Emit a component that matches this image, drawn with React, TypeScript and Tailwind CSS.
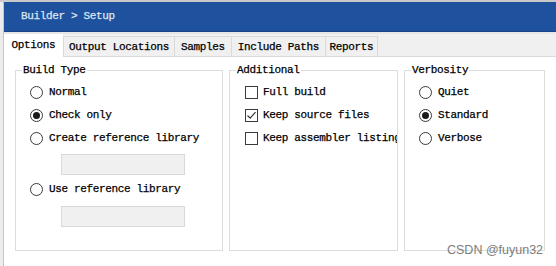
import React from "react";

const mono = "font-['Liberation_Mono','DejaVu_Sans_Mono',monospace] text-[11px] tracking-[-0.35px] text-black [-webkit-text-stroke:0.25px_currentColor]";

function Radio({ checked, label }: { checked?: boolean; label: string }) {
  return (
    <div className="flex h-[23px] items-center gap-[6px] whitespace-nowrap">
      <span className="flex h-[13px] w-[13px] shrink-0 items-center justify-center rounded-full border border-[#3a3a3a] bg-white">
        {checked && <span className="h-[7px] w-[7px] rounded-full bg-[#1a1a1a]" />}
      </span>
      <span>{label}</span>
    </div>
  );
}

function Check({ checked, label }: { checked?: boolean; label: string }) {
  return (
    <div className="flex h-[23px] items-center gap-[5px] whitespace-nowrap">
      <span className="flex h-[13px] w-[13px] shrink-0 items-center justify-center border border-[#3a3a3a] bg-white">
        {checked && (
          <svg width="11" height="11" viewBox="0 0 11 11">
            <path d="M1.5 5.5 L4.2 8.2 L9.5 2.2" fill="none" stroke="#333" strokeWidth="1.2" />
          </svg>
        )}
      </span>
      <span>{label}</span>
    </div>
  );
}

function Group({ title, width, padLeft, children }: { title: string; width: string; padLeft: string; children: React.ReactNode }) {
  return (
    <div className={`relative h-[181px] shrink-0 border border-[#dcdcdc] ${width}`}>
      <div className="absolute -top-[8px] left-[6px] bg-white px-[1px] leading-[14px]">{title}</div>
      <div className={`h-full overflow-hidden pt-[10px] ${padLeft}`}>{children}</div>
    </div>
  );
}

const tabs = [
  { label: "Output Locations", w: "w-[112px] border-l" },
  { label: "Samples", w: "w-[57px]" },
  { label: "Include Paths", w: "w-[94px]" },
  { label: "Reports", w: "w-[52px]" },
];

export default function App() {
  return (
    <div className={`relative h-[266px] w-[556px] overflow-hidden bg-white ${mono}`}>
      <div className="h-[2px] bg-[#c9c9c9]" />
      <div className="flex h-[264px]">
        <div className="w-[4px] shrink-0 border-r border-[#c4c4c4] bg-[#ececec]" />
        <div className="flex min-w-0 flex-1 flex-col">
          <div className="flex h-[30px] shrink-0 items-center border-b border-[#184387] bg-[#1e519e] pl-[17px] text-[#dfe6f1]">
            Builder &gt; Setup
          </div>
          <div className="h-[2px] shrink-0 bg-[#e6e6e6]" />
          <div className="flex h-[23px] shrink-0 items-end border-b border-[#dadada] bg-[#f0f0f0]">
            <div className="relative top-[1px] flex h-[23px] w-[59px] items-center justify-center bg-white">
              Options
            </div>
            {tabs.map((t) => (
              <div
                key={t.label}
                className={`flex h-[20px] ${t.w} items-center justify-center border-r border-t border-[#dadada] bg-[#f0f0f0] pt-[1px]`}
              >
                {t.label}
              </div>
            ))}
          </div>
          <div className="flex gap-[6px] pl-[11px] pt-[13px]">
            <Group title="Build Type" width="w-[208px]" padLeft="pl-[14px]">
              <Radio label="Normal" />
              <Radio checked label="Check only" />
              <Radio label="Create reference library" />
              <div className="ml-[31px] mt-[4px] h-[21px] w-[124px] border border-[#d9d9d9] bg-[#f0f0f0]" />
              <div className="mt-[3px]">
                <Radio label="Use reference library" />
              </div>
              <div className="ml-[31px] mt-[5px] h-[21px] w-[124px] border border-[#d9d9d9] bg-[#f0f0f0]" />
            </Group>
            <Group title="Additional" width="w-[169px]" padLeft="pl-[15px]">
              <Check label="Full build" />
              <Check checked label="Keep source files" />
              <Check label="Keep assembler listing" />
            </Group>
            <Group title="Verbosity" width="w-[141px]" padLeft="pl-[14px]">
              <Radio label="Quiet" />
              <Radio checked label="Standard" />
              <Radio label="Verbose" />
            </Group>
          </div>
        </div>
      </div>
      <div className="absolute left-[447px] top-[242px] font-['Liberation_Sans',Arial,sans-serif] text-[12.5px] leading-[16px] tracking-normal text-[#7d7d7d] [-webkit-text-stroke:0px]">
        CSDN @fuyun32
      </div>
    </div>
  );
}
